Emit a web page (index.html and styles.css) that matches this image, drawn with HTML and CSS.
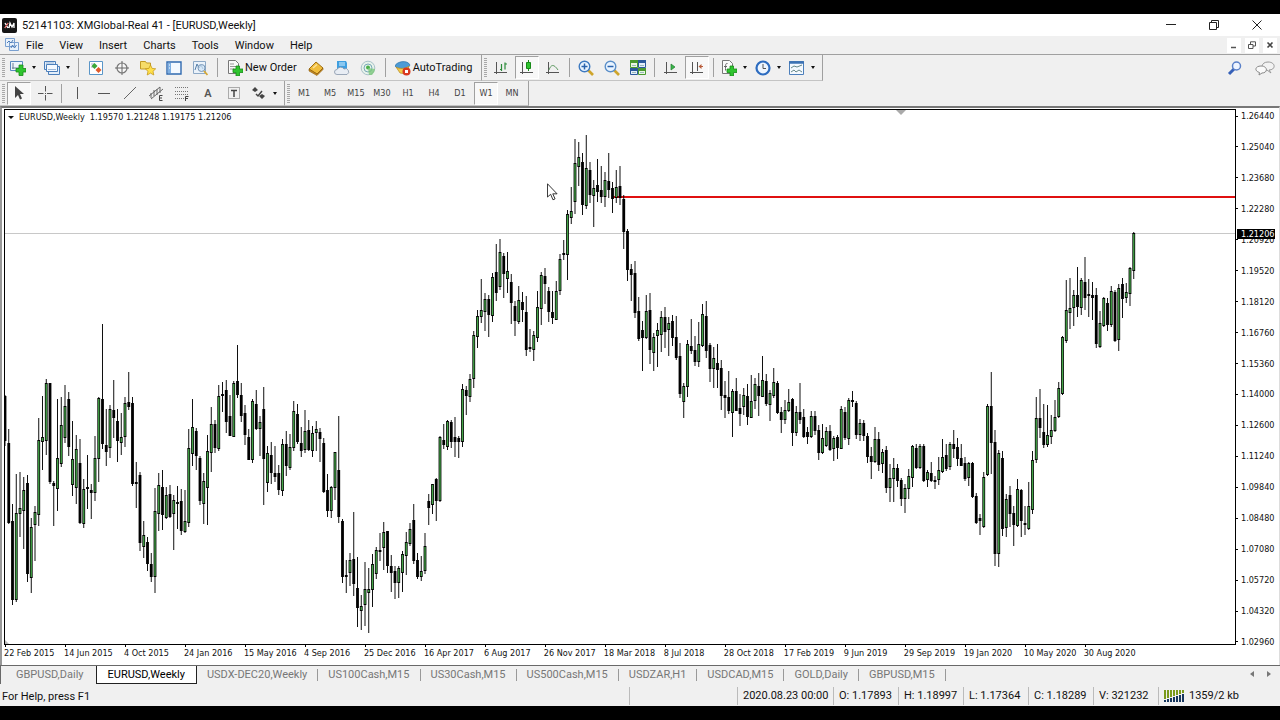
FILE: index.html
```html
<!DOCTYPE html>
<html lang="en">
<head>
  <meta charset="UTF-8" />
  <meta name="viewport" content="width=device-width, initial-scale=1.0"/>
  <title>52141103: XMGlobal-Real 41 - [EURUSD,Weekly]</title>
  <link rel="stylesheet" href="styles.css">
</head>
<body>
  <header class="titlebar">
    <svg class="app-logo" viewBox="0 0 15 15"><rect width="15" height="15" rx="2" fill="#151515"/><path d="M3 5l3 5M6 5l-3 5M7 10l1-5 2 4 2-4v5" stroke="#fff" stroke-width="1.3" fill="none"/><path d="M3 10l3-5" stroke="#d33" stroke-width="1"/></svg>
    <h1>52141103: XMGlobal-Real 41 - [EURUSD,Weekly]</h1>
    <div class="window-buttons">
      <button aria-label="Minimize"><svg viewBox="0 0 10 10"><path d="M0 4.5h10" stroke="#222" fill="none"/></svg></button>
      <button aria-label="Restore"><svg viewBox="0 0 10 10"><path d="M.5 2.5h7v7h-7zM2.500 2.500v-2h7v7h-2" stroke="#222" fill="none"/></svg></button>
      <button aria-label="Close"><svg viewBox="0 0 10 10"><path d="M.5.5l9 9M9.500.5l-9 9" stroke="#222" fill="none"/></svg></button>
    </div>
  </header>

  <nav class="menubar">
    <svg class="chart-logo" viewBox="0 0 14 14"><path d="M.5.5h9v8h-9zM4.500 4.500h9v8h-9z" fill="#e8f1fb" stroke="#7aa0d0"/><path d="M2 5l2-2 2 2 2-3M6 10l1.500-3 2 3 2-3" stroke="#4e7cb8" fill="none"/></svg>
    <a href="#">File</a>
    <a href="#">View</a>
    <a href="#">Insert</a>
    <a href="#">Charts</a>
    <a href="#">Tools</a>
    <a href="#">Window</a>
    <a href="#">Help</a>
    <div class="mdi-buttons">
      <button aria-label="Minimize chart"><svg viewBox="0 0 8 8"><path d="M1 6.500h5" stroke="#555" stroke-width="1.500"/></svg></button>
      <button aria-label="Restore chart"><svg viewBox="0 0 8 8"><path d="M.5 3.500h4.500v4H.5zM2.500 3V.8h5V5H5" stroke="#555" fill="none"/></svg></button>
      <button aria-label="Close chart"><svg viewBox="0 0 8 8"><path d="M1.500 1.500l5 5M6.500 1.500l-5 5" stroke="#444" stroke-width="1.600"/></svg></button>
    </div>
  </nav>

  <div class="toolbar standard">
    <div class="group">
      <span class="grip"></span>
      <button class="drop" aria-label="New chart"><svg viewBox="0 0 16 16"><path d="M.5 1.500h12v9H.5z" fill="#eef5fc" stroke="#5b8ac0"/><path d="M3 3v6M2 8h8" stroke="#6c7f95"/><path d="M9 5h4v3.500h3v3.500h-3v3.500H9V12H6V8.500h3z" fill="#2fc42f" stroke="#168a16" stroke-width=".8"/></svg></button>
      <button class="drop" aria-label="Profiles"><svg viewBox="0 0 16 16"><path d="M.5 1.500h11v8H.5zM4.500 6.500h11v8h-11z" fill="#e3eefa" stroke="#4c7fbb"/><path d="M2.500 4.500h11v7h-11z" fill="#f4f9ff" stroke="#4c7fbb"/><path d="M2 3h8M4 9.500h8" stroke="#9ab7d8"/></svg></button>
      <span class="sep"></span>
      <button aria-label="Market watch"><svg viewBox="0 0 16 16"><path d="M1.500 1.500h13v13h-13z" fill="#fff" stroke="#5a96c8"/><path d="M3 4h3M3 7h2" stroke="#aac"/><path d="M6.500 3l3 3-3 3-3-3z" fill="#39a839"/><path d="M10.500 7l3 3-3 3-3-3z" fill="#e05a2b"/></svg></button>
      <button aria-label="Data window"><svg viewBox="0 0 16 16"><circle cx="8" cy="8" r="5" fill="#f7f7f7" stroke="#777" stroke-width="1.200"/><path d="M8 1v14M1 8h14" stroke="#666"/></svg></button>
      <button aria-label="Navigator"><svg viewBox="0 0 16 16"><path d="M.5 1.500h5l1 1.500h4v6h-10z" fill="#f6dc6a" stroke="#c29a26"/><path d="M10.500 5l1.600 3.400 3.600.4-2.700 2.500.8 3.700-3.300-1.900L7.200 15l.8-3.700-2.700-2.500 3.600-.4z" fill="#ffe04a" stroke="#c79a1c" stroke-width=".8"/></svg></button>
      <button aria-label="Terminal"><svg viewBox="0 0 16 16"><path d="M1 2h14v12H1z" fill="#f4f9ff" stroke="#2f6ab0" stroke-width="1.400"/><path d="M2 3h3v10H2z" fill="#7eb0e4"/><path d="M3 5h1M3 8h1" stroke="#fff"/></svg></button>
      <button aria-label="Strategy tester"><svg viewBox="0 0 16 16"><path d="M1.500 1.500h12v12h-12z" fill="#eaf2fa" stroke="#8da9c6"/><path d="M3 10l2-6 2 4 2-3 2 4" stroke="#547ea8" fill="none"/><circle cx="9.500" cy="8" r="3.500" fill="#cfe4f7" fill-opacity=".7" stroke="#7897b8"/><path d="M12 11l3.500 4" stroke="#d6a834" stroke-width="1.800"/></svg></button>
      <span class="sep"></span>
      <button class="wide"><svg viewBox="0 0 16 16"><path d="M1.500.5h7l3 3v10h-10z" fill="#fafafa" stroke="#777"/><path d="M3 4h4M3 6.500h6M3 9h4" stroke="#999"/><path d="M9 6h3.500v3H16v3.500h-3.500V16H9v-3.500H6V9h3z" fill="#2fc42f" stroke="#168a16" stroke-width=".8"/></svg>New Order</button>
      <button aria-label="MetaEditor"><svg viewBox="0 0 16 16"><path d="M1 9l7-7 7 6-6 6z" fill="#f0bd3c" stroke="#a06f14"/><path d="M1 9v2l8 4.500 6-6V8l-6 6z" fill="#c98c1e" stroke="#8a5c10" stroke-width=".6"/><path d="M5 8l4-3.500" stroke="#fbe29a" stroke-width="1.500"/></svg></button>
      <button aria-label="MQL5 community"><svg viewBox="0 0 16 16"><path d="M3 1h9l1 2v7H3z" fill="#3f9fe0"/><path d="M5 3h6M5 5h6" stroke="#d8f0ff"/><path d="M3 14.500a2.500 2.500 0 0 1 0-5 4 4 0 0 1 7-.5 3 3 0 0 1 3 5.500z" fill="#e8edf4" stroke="#8795aa" stroke-width=".8"/></svg></button>
      <button aria-label="Signals"><svg viewBox="0 0 16 16"><circle cx="8" cy="8" r="6.800" fill="#e7f2ea" stroke="#a9c2c9"/><circle cx="8" cy="8" r="4" fill="none" stroke="#79a9b8"/><circle cx="8" cy="7.500" r="2" fill="#4ab04a"/><path d="M8 8l1 7h3a8 8 0 0 0 3-6z" fill="#7cc77c" fill-opacity=".8"/></svg></button>
      <span class="sep"></span>
      <button class="wide"><svg viewBox="0 0 16 16"><path d="M0 6c1-4 12-7 15-1l-3 4H3z" fill="#4c9bd6" stroke="#2f74aa" stroke-width=".7"/><path d="M1 7c3 2 10 2 13-1l-3 8-6-1z" fill="#f3c94b" stroke="#b48a20" stroke-width=".7"/><circle cx="11.500" cy="11.500" r="4" fill="#d9381e"/><path d="M10 10h3v3h-3z" fill="#fff"/></svg>AutoTrading</button>
    </div>
    <div class="group">
      <span class="grip"></span>
      <button aria-label="Bar chart"><svg viewBox="0 0 16 16"><path d="M3.500 2v12M1 12.500h13" stroke="#555"/><path d="M8.500 4v7M7 9.500h1M12 2.500v7M12 4h2" stroke="#2b8b3a" stroke-width="1.200"/></svg></button>
      <button class="pressed" aria-label="Candlesticks"><svg viewBox="0 0 16 16"><path d="M3.500 2v12M1 12.500h13" stroke="#555"/><path d="M9.500 0v11" stroke="#178a17"/><path d="M7.500 2.500h4v6h-4z" fill="#2fc42f" stroke="#178a17"/></svg></button>
      <button aria-label="Line chart"><svg viewBox="0 0 16 16"><path d="M3.500 2v12M1 12.500h13" stroke="#555"/><path d="M4 10c2-6 5-6 9 0" stroke="#5f9a62" fill="none"/></svg></button>
      <span class="sep"></span>
      <button aria-label="Zoom in"><svg viewBox="0 0 16 16"><path d="M10 10l5 5" stroke="#cfa52c" stroke-width="2.600"/><circle cx="6.500" cy="6.500" r="5.300" fill="#e9f4ff" stroke="#3c79c0" stroke-width="1.400"/><path d="M6.500 3.500v6M3.500 6.500h6" stroke="#2a63ad" stroke-width="1.500"/></svg></button>
      <button aria-label="Zoom out"><svg viewBox="0 0 16 16"><path d="M10 10l5 5" stroke="#cfa52c" stroke-width="2.600"/><circle cx="6.500" cy="6.500" r="5.300" fill="#e9f4ff" stroke="#5b8fc9" stroke-width="1.400"/><path d="M3.500 6.500h6" stroke="#2a63ad" stroke-width="1.500"/></svg></button>
      <button aria-label="Tile windows"><svg viewBox="0 0 16 16"><path d="M.5.5h7v7h-7zM8.500 8.500h7v6h-7z" fill="#eaf6e4" stroke="#4a9a30"/><path d="M8.500.5h7v7h-7zM.5 8.500h7v6h-7z" fill="#e4eefa" stroke="#2c5a9c"/><path d="M0 1.500h8M8 9.500h8" stroke="#4a9a30" stroke-width="3"/><path d="M8 1.500h8M0 9.500h8" stroke="#2c5a9c" stroke-width="3"/><path d="M2 5.500h4M10 5.500h4M2 12.500h4M10 12.500h4" stroke="#9bb"/></svg></button>
      <span class="sep"></span>
      <button aria-label="Auto scroll"><svg viewBox="0 0 16 16"><path d="M3.500 2v12M1 12.500h13" stroke="#555"/><path d="M8 4l4 3-4 3z" fill="#39b54a" stroke="#1f7d2c" stroke-width=".7"/></svg></button>
      <button class="pressed" aria-label="Chart shift"><svg viewBox="0 0 16 16"><path d="M3.500 2v12M1 12.500h13M8.500 2v9" stroke="#555"/><path d="M9.500 6.500l3-2.500v5z" fill="#b85c3a"/><path d="M12 6.500h2" stroke="#b85c3a"/></svg></button>
      <span class="sep"></span>
      <button class="drop" aria-label="Indicators"><svg viewBox="0 0 16 16"><path d="M1.500.5h7l3 3v10h-10z" fill="#fafafa" stroke="#777"/><path d="M6.500 3.500c-2-.5-2 1-2 7M3 6.500h3" stroke="#666" fill="none"/><path d="M9 6h3.500v3H16v3.500h-3.500V16H9v-3.500H6V9h3z" fill="#2fc42f" stroke="#168a16" stroke-width=".8"/></svg></button>
      <button class="drop" aria-label="Periodicity"><svg viewBox="0 0 16 16"><circle cx="8" cy="8" r="6.500" fill="#eef6ff" stroke="#2d6cc0" stroke-width="2.200"/><path d="M8 4v4.500h3" stroke="#555" fill="none"/></svg></button>
      <button class="drop" aria-label="Templates"><svg viewBox="0 0 16 16"><path d="M.5 1.500h14v13H.5z" fill="#f4f9ff" stroke="#4c7fbb"/><path d="M0 2.500h15" stroke="#3c72b3" stroke-width="2.500"/><path d="M2 8l3-2 3 1 5-2M2 12l3-2 2 2 3-2 3 2" stroke="#688" fill="none"/></svg></button>
    </div>
    <div class="toolbar-right">
      <button aria-label="Search"><svg viewBox="0 0 16 16"><path d="M2 14l5-5" stroke="#3560b8" stroke-width="3"/><circle cx="9.500" cy="6" r="4" fill="#eef4ff" stroke="#5a80c8" stroke-width="1.500"/></svg></button>
      <button aria-label="Chat"><svg viewBox="0 0 20 16"><path d="M13 2c8 0 8 8 1 8l2 3-4-3c-7-1-6-8 1-8z" fill="#f2f2f2" stroke="#999"/><path d="M6 6c7 0 7 7 1 7l-3 2 .5-2.500C-1 11 0 6 6 6z" fill="#fafafa" stroke="#888"/></svg></button>
    </div>
  </div>

  <div class="toolbar">
    <div class="group">
      <span class="grip"></span>
      <button class="pressed" aria-label="Cursor"><svg viewBox="0 0 16 16"><path d="M4 1v12l3-3 2 4.500 2-1L9 9h4z" fill="#444"/></svg></button>
      <button aria-label="Crosshair"><svg viewBox="0 0 16 16"><path d="M8.500 1v5.500M8.500 10v5.500M1 8.500h5.500M10 8.500h5.500M8 8.500h1" stroke="#555"/></svg></button>
      <span class="sep"></span>
      <button aria-label="Vertical line"><svg viewBox="0 0 16 16"><path d="M7.500 2v12" stroke="#555"/></svg></button>
      <button aria-label="Horizontal line"><svg viewBox="0 0 16 16"><path d="M2 8.500h12" stroke="#555"/></svg></button>
      <button aria-label="Trendline"><svg viewBox="0 0 16 16"><path d="M2 14L14 2" stroke="#666"/></svg></button>
      <button aria-label="Equidistant channel"><svg viewBox="0 0 16 16"><path d="M1 11L12 2M3 14L15 4M3 8v5M6 5v6M9 4v6M12 2v6" stroke="#666"/><path d="M14.500 10.500h-3v5h3M11.500 13h2.500" stroke="#444" fill="none"/></svg></button>
      <button aria-label="Fibonacci"><svg viewBox="0 0 16 16"><path d="M1 2.500h14M1 6.500h14M1 9.500h14M1 13.500h9" stroke="#777" stroke-dasharray="1 1"/><path d="M14.500 11.500h-3V16M11.500 13.500h2.500" stroke="#444" fill="none"/></svg></button>
      <button class="letter" aria-label="Text">A</button>
      <button aria-label="Text label"><svg viewBox="0 0 16 16"><path d="M2.500 2.500h11v11h-11z" fill="none" stroke="#666" stroke-dasharray="1 1"/><path d="M5 5.500h6M8 5.500V12" stroke="#444" stroke-width="1.500"/></svg></button>
      <button class="drop" aria-label="Arrows"><svg viewBox="0 0 16 16"><path d="M1 5l3-3 3 3-3 2zM8 11l3-2 3 2-3 3z" fill="#444"/><path d="M5 9l2 2 4-5" stroke="#444" stroke-width="1.500" fill="none"/></svg></button>
    </div>
    <div class="group">
      <span class="grip"></span>
      <button class="period">M1</button>
      <button class="period">M5</button>
      <button class="period">M15</button>
      <button class="period">M30</button>
      <button class="period">H1</button>
      <button class="period">H4</button>
      <button class="period">D1</button>
      <button class="period pressed">W1</button>
      <button class="period">MN</button>
    </div>
  </div>

  <main class="chart-window">
    <div class="plot">
      <svg class="candles" id="candles" viewBox="0 110 1312 534" preserveAspectRatio="none"></svg>
      <p class="chart-title"><span class="down-mark"></span>EURUSD,Weekly&nbsp; 1.19570 1.21248 1.19175 1.21206</p>
      <span class="shift-mark"></span>
      <span class="corner-mark"></span>
      <svg class="pointer" viewBox="0 0 12 19"><path d="M.5.5v14.500l3.500-3 2.500 6 2.300-1-2.500-5.500h4.700z" fill="#fff" stroke="#222"/></svg>
    </div>
    <div class="price-axis">
      <ol id="prices"></ol>
      <span class="current-price">1.21206</span>
    </div>
    <ol class="time-axis" id="dates"></ol>
  </main>

  <nav class="tabs">
    <a href="#">GBPUSD,Daily</a>
    <a href="#" class="active">EURUSD,Weekly</a>
    <a href="#">USDX-DEC20,Weekly</a>
    <a href="#">US100Cash,M15</a>
    <a href="#">US30Cash,M15</a>
    <a href="#">US500Cash,M15</a>
    <a href="#">USDZAR,H1</a>
    <a href="#">USDCAD,M15</a>
    <a href="#">GOLD,Daily</a>
    <a href="#">GBPUSD,M15</a>
    <div class="tab-scroll">
      <button aria-label="Previous tabs"><svg viewBox="0 0 4 6"><path d="M4 0v6L0 3z" fill="#777"/></svg></button>
      <button aria-label="Next tabs"><svg viewBox="0 0 4 6"><path d="M0 0v6l4-3z" fill="#777"/></svg></button>
    </div>
  </nav>

  <footer class="statusbar">
    <span class="help">For Help, press F1</span>
    <span class="cell profile"></span>
    <span class="cell time">2020.08.23 00:00</span>
    <span class="cell">O: 1.17893</span>
    <span class="cell">H: 1.18997</span>
    <span class="cell">L: 1.17364</span>
    <span class="cell">C: 1.18289</span>
    <span class="cell">V: 321232</span>
    <span class="cell traffic"><svg viewBox="0 0 21 12"><path d="M1 0v9M4 0v8M7 0v7M10 0v6M13 0v5M16 0v4M19 0v3" stroke="#7a9a1c" stroke-width="2"/><path d="M1 10v2M4 9v3M7 8v4M10 7v5M13 6v6M16 5v7M19 4v8" stroke="#16365e" stroke-width="2"/></svg>1359/2 kb</span>
  </footer>

  <script src="chart.js"></script>
</body>
</html>
```
FILE: styles.css
```css
:root {
  --face: #f0f0f0;
  --line: #a0a0a0;
  --dark: #696969;
  --up: #43a547;
  --ui: Roboto, "Open Sans", sans-serif;
  --small: "DejaVu Sans Condensed", "Noto Sans", sans-serif;
}

* {
  box-sizing: border-box;
}

body {
  margin: 0;
  padding: 14px 0;
  height: 100vh;
  display: flex;
  flex-direction: column;
  background: #000;
  color: #111;
  font-family: var(--ui);
  font-size: 11px;
  overflow: hidden;
}

button {
  border: 0;
  padding: 0;
  background: none;
  font: inherit;
  color: inherit;
  display: flex;
  align-items: center;
  justify-content: center;
}

a {
  color: inherit;
  text-decoration: none;
}

ol {
  list-style: none;
  margin: 0;
  padding: 0;
}

/* title and menu */
.titlebar {
  flex: 0 0 22px;
  display: flex;
  align-items: center;
  background: #fff;
  padding-left: 2px;
}

.app-logo {
  width: 15px;
  height: 15px;
  margin-right: 5px;
}

.titlebar h1 {
  margin: 0;
  font-size: 11px;
  font-weight: 400;
}

.window-buttons {
  display: flex;
  margin-left: auto;
  margin-right: 2px;
}

.window-buttons button {
  width: 43px;
  height: 20px;
}

.window-buttons svg {
  width: 10px;
  height: 10px;
}

.menubar {
  flex: 0 0 19px;
  display: flex;
  align-items: center;
  gap: 16px;
  background: var(--face);
  border-bottom: 1px solid var(--line);
  padding-left: 5px;
}

.chart-logo {
  width: 14px;
  height: 14px;
  margin-right: -9px;
}

.mdi-buttons {
  display: flex;
  gap: 4px;
  margin-left: auto;
  margin-right: 3px;
}

.mdi-buttons button {
  width: 14px;
  height: 15px;
  background: #fff;
}

.mdi-buttons svg {
  width: 8px;
  height: 8px;
}

/* toolbars */
.toolbar {
  flex: 0 0 26px;
  display: flex;
  background: var(--face);
}

.toolbar:not(.standard) {
  flex-basis: 25px;
}

.group {
  display: flex;
  align-items: center;
  gap: 2px;
  padding: 0 4px 0 2px;
  border-right: 1px solid var(--line);
  border-bottom: 1px solid #c4c4c4;
}

.group button {
  width: 24px;
  height: 23px;
}

.group svg,
.toolbar-right svg {
  width: 16px;
  height: 16px;
}

.grip {
  width: 3px;
  height: 19px;
  background: repeating-linear-gradient(#a8a8a8 0 1px, var(--face) 1px 2px);
}

.sep {
  width: 1px;
  height: 19px;
  margin: 0 2px;
  background: var(--line);
}

.standard .group:first-child .sep {
  margin: 0 3px;
}

.group .drop {
  width: 32px;
  gap: 6px;
}

.drop::after,
.down-mark {
  content: "";
  border: 3px solid transparent;
  border-top-color: #111;
  border-bottom: 0;
}

.drop::after {
  border-width: 3px 2px 0;
}

.group .wide {
  width: auto;
  gap: 2px;
  padding: 0 5px 0 4px;
}

.group .pressed {
  background: #f8f8f8;
  border: 1px solid #fff;
  border-top-color: var(--line);
  border-left-color: var(--line);
}

.group .letter {
  font-weight: 600;
  color: #555;
}

.group .period {
  font-family: var(--small);
  font-size: 9px;
  color: #444;
}

.toolbar-right {
  display: flex;
  align-items: center;
  gap: 12px;
  margin-left: auto;
  margin-right: 5px;
}

.toolbar-right button:last-child svg {
  width: 20px;
}

/* chart */
.chart-window {
  flex: 1;
  min-height: 0;
  display: grid;
  grid-template-columns: 1fr 43px;
  grid-template-rows: 1fr 20px;
  background: #fff;
  border-top: 2px solid #777;
  border-left: 2px solid #999;
  border-right: 1px solid #ddd;
  padding: 1px 0 0 2px;
  font-family: var(--small);
  font-size: 9px;
}

.plot {
  position: relative;
  min-height: 0;
  border: 1px solid #000;
}

.candles {
  display: block;
  width: 100%;
  height: 100%;
}

.candles .ink {
  fill: #000;
}

.candles .up {
  fill: var(--up);
}

.candles .bid {
  fill: #c8c8c8;
}

.candles .resistance {
  fill: #e01010;
}

.chart-title {
  position: absolute;
  top: 1px;
  left: 3px;
  margin: 0;
  display: flex;
  align-items: center;
  gap: 5px;
  line-height: 12px;
}

.shift-mark {
  position: absolute;
  top: 0;
  left: 891px;
  border: 5px solid transparent;
  border-top-color: #aaa;
  border-bottom: 0;
}

.corner-mark {
  position: absolute;
  left: 0;
  bottom: 0;
  border: 2px solid #bbb;
  border-top-color: transparent;
  border-right-color: transparent;
}

.pointer {
  position: absolute;
  left: 542px;
  top: 73px;
  width: 11px;
  height: 18px;
}

.price-axis {
  position: relative;
  margin-bottom: -3px;
  padding-top: 1px;
}

.price-axis ol {
  height: 100%;
  display: flex;
  flex-direction: column;
  justify-content: space-between;
}

.price-axis li {
  display: flex;
  align-items: center;
  gap: 3px;
  line-height: 12px;
}

.price-axis li::before {
  content: "";
  width: 2px;
  height: 1px;
  background: #000;
}

.current-price {
  position: absolute;
  top: 22%;
  left: 1px;
  width: 38px;
  margin-top: 1px;
  padding-left: 4px;
  background: #000;
  color: #fff;
  line-height: 10px;
}

.time-axis {
  display: flex;
  margin-right: 2px;
}

.time-axis li {
  flex: 0 0 4.878%;
  white-space: nowrap;
  line-height: 12px;
}

.time-axis li::before {
  content: "";
  display: block;
  width: 1px;
  height: 2px;
  margin-left: 1px;
  background: #000;
}

/* chart tabs */
.tabs {
  flex: 0 0 19px;
  display: flex;
  align-items: flex-start;
  background: var(--face);
  border-top: 1px solid var(--dark);
  border-left: 1px solid var(--dark);
  padding-left: 5px;
  color: #777;
}

.tabs a {
  margin-top: 3px;
  padding: 0 10px;
  line-height: 12px;
  border-right: 1px solid #999;
}

.tabs a:first-child {
  padding-right: 12px;
  border-right: 0;
}

.tabs .active {
  margin-top: 0;
  padding: 0 11px;
  background: #fff;
  color: #000;
  line-height: 17px;
  border: 1px solid #222;
  border-top: 0;
}

.tab-scroll {
  display: flex;
  gap: 13px;
  margin-top: 5px;
  margin-left: auto;
  margin-right: 9px;
}

.tab-scroll svg {
  width: 4px;
  height: 6px;
}

/* status bar */
.statusbar {
  flex: 0 0 22px;
  display: flex;
  align-items: center;
  background: var(--face);
  padding: 2px 0 0 2px;
}

.help {
  flex: 1;
}

.cell {
  flex: 0 0 65px;
  height: 18px;
  line-height: 18px;
  padding-left: 5px;
  border-left: 1px solid #bbb;
  white-space: nowrap;
}

.profile {
  flex-basis: 108px;
}

.time {
  flex-basis: 96px;
}

.traffic {
  flex-basis: 122px;
  display: flex;
  align-items: center;
  gap: 4px;
}

.traffic svg {
  width: 21px;
  height: 12px;
}
```
FILE: chart.js
```js
// one row per week: high, body top, body bottom, low, 1 = close above open
const weeks = [
  [395,396,440,445,0],[429,443,522,523,0],[504,521,599,604,0],[474,513,599,601,1],[472,508,513,536,1],
  [477,490,510,548,1],[475,483,573,581,0],[518,527,577,592,1],[506,512,524,560,1],[418,440,514,525,1],
  [396,437,441,469,1],[379,383,440,454,1],[383,383,481,483,0],[481,483,485,525,0],[399,458,488,510,1],
  [397,425,463,466,1],[385,406,437,442,1],[392,399,446,455,0],[421,459,484,495,1],[435,449,487,503,1],
  [439,463,522,523,0],[479,489,523,527,1],[455,487,488,508,0],[484,490,492,518,0],[436,458,492,500,1],
  [397,398,458,481,1],[324,399,443,448,0],[409,445,451,465,0],[405,409,447,457,1],[380,410,417,437,0],
  [409,421,440,461,0],[413,437,442,454,1],[397,403,436,446,1],[372,402,406,409,0],[397,403,483,485,0],
  [462,482,483,507,0],[472,475,542,550,0],[521,535,546,557,1],[537,542,563,570,0],[553,564,576,581,0],
  [488,511,576,592,1],[473,485,513,530,1],[470,487,514,529,0],[487,495,517,518,1],[485,494,516,517,0],
  [495,500,513,549,1],[486,502,503,528,0],[489,501,530,534,0],[490,521,531,532,1],[429,448,522,526,1],
  [399,427,453,465,1],[428,431,455,469,0],[456,458,500,504,0],[473,481,503,523,1],[435,451,487,524,1],
  [407,424,452,471,1],[420,424,447,452,0],[385,396,448,450,1],[382,394,395,411,0],[380,390,421,432,0],
  [395,416,435,435,0],[381,383,436,436,1],[345,381,394,397,0],[383,395,415,421,0],[405,413,434,444,0],
  [429,437,459,459,0],[399,401,459,462,1],[390,404,428,429,0],[416,422,428,455,1],[387,409,458,504,0],
  [446,453,482,491,1],[442,455,472,483,0],[446,473,476,481,0],[465,473,489,494,0],[439,444,490,495,1],
  [431,444,465,475,0],[434,447,467,469,1],[401,411,447,450,1],[404,414,441,443,0],[427,443,450,456,0],
  [410,431,449,452,1],[420,430,449,450,0],[426,433,450,456,1],[421,429,432,450,1],[428,432,438,461,0],
  [438,443,491,492,0],[474,490,510,516,0],[486,487,510,517,1],[452,452,487,499,1],[416,470,516,522,0],
  [519,521,576,582,0],[560,575,576,592,0],[553,560,572,585,1],[512,559,583,595,0],[557,588,607,626,0],
  [595,606,610,629,1],[562,589,604,625,1],[568,589,592,632,1],[554,564,589,606,1],[547,550,573,578,1],
  [533,550,551,560,0],[522,532,547,569,1],[531,531,565,572,0],[555,566,572,591,0],[566,571,582,598,0],
  [566,568,582,597,1],[551,554,572,591,1],[532,542,555,574,1],[523,529,543,545,1],[504,520,560,563,0],
  [553,560,576,578,0],[556,571,576,580,1],[533,546,570,573,1],[494,501,507,524,0],[484,484,504,513,1],
  [478,479,500,520,0],[436,437,500,501,1],[424,440,444,448,0],[420,421,446,449,1],[420,422,441,447,0],
  [417,437,441,456,0],[436,438,441,457,0],[384,389,441,446,1],[386,390,395,414,0],[374,379,396,401,1],
  [331,335,378,387,1],[310,316,336,347,1],[279,310,316,322,1],[293,299,311,330,1],[295,299,314,336,0],
  [273,277,315,321,1],[244,272,292,300,0],[239,252,286,289,1],[253,256,273,297,0],[252,271,278,292,1],
  [274,282,302,323,0],[301,306,320,335,0],[286,300,321,323,1],[292,302,309,321,0],[296,312,349,355,0],
  [329,347,348,351,0],[331,335,349,360,1],[291,307,337,341,1],[272,275,308,324,1],[268,276,283,303,0],
  [287,291,311,321,0],[291,312,317,323,0],[281,291,319,319,1],[254,259,290,294,1],[240,253,254,259,0],
  [210,214,254,279,1],[187,211,217,223,1],[139,163,201,213,1],[142,157,166,185,1],[153,162,204,214,0],
  [135,168,205,208,1],[162,170,194,202,0],[180,188,195,226,1],[159,185,191,201,0],[166,190,196,202,0],
  [172,180,196,206,1],[153,181,189,197,0],[182,188,198,212,0],[170,187,197,202,1],[166,186,197,204,0],
  [195,199,231,248,0],[229,231,269,280,0],[264,269,274,300,0],[261,273,312,317,0],[297,311,338,340,0],
  [321,330,337,370,0],[295,311,337,338,1],[293,310,349,363,0],[333,337,352,370,1],[323,330,335,366,1],
  [311,317,334,351,1],[307,317,331,347,0],[317,323,329,355,1],[315,321,337,345,0],[316,337,357,359,0],
  [343,356,393,397,0],[383,386,401,417,1],[340,344,386,396,1],[319,346,350,353,0],[336,350,361,365,0],
  [322,344,361,366,1],[304,314,345,346,1],[301,316,350,357,0],[343,345,368,381,0],[347,358,368,387,1],
  [344,363,369,387,0],[360,368,395,409,0],[381,395,397,417,0],[371,397,410,413,0],[389,391,412,436,1],
  [378,391,410,410,0],[394,408,413,425,0],[388,395,406,414,1],[384,396,416,424,0],[375,401,417,417,1],
  [378,384,400,408,1],[373,386,395,415,0],[356,380,396,396,1],[374,381,403,405,0],[390,393,404,420,1],
  [368,382,395,397,1],[381,383,412,413,0],[407,412,419,432,0],[400,410,419,423,1],[389,402,410,411,1],
  [398,399,432,445,0],[406,412,432,435,1],[383,412,419,423,0],[409,417,436,437,0],[427,432,436,443,0],
  [411,416,436,437,1],[411,416,430,434,0],[425,430,452,459,0],[424,438,452,453,1],[427,431,445,446,1],
  [425,431,449,450,0],[436,438,448,460,1],[435,437,447,458,0],[406,409,448,448,1],[407,412,437,439,0],
  [398,400,438,444,1],[391,400,401,406,0],[401,403,434,438,0],[419,423,434,440,1],[420,423,435,440,0],
  [433,436,456,462,0],[447,456,461,478,0],[427,439,461,462,1],[432,439,464,470,0],[449,452,463,472,1],
  [446,450,487,492,0],[464,478,487,501,1],[458,468,478,501,1],[464,468,480,486,0],[478,480,498,505,0],
  [484,488,498,512,1],[469,476,488,498,1],[445,446,477,486,1],[444,448,467,468,0],[444,446,467,468,1],
  [444,446,480,481,0],[470,472,479,486,1],[462,473,480,481,0],[476,480,481,488,0],[457,470,479,484,1],
  [439,457,471,472,1],[444,455,468,470,0],[442,444,466,469,1],[430,444,448,457,0],[438,447,458,465,0],
  [444,458,465,465,0],[457,463,478,480,0],[462,463,477,485,1],[462,463,496,497,0],[493,496,522,523,0],
  [514,518,520,534,0],[472,477,526,527,1],[404,406,474,475,1],[372,406,442,473,0],[430,442,553,565,0],
  [450,453,553,566,1],[451,458,528,535,0],[494,499,527,536,1],[486,495,513,526,0],[506,513,524,545,0],
  [479,489,525,526,1],[489,490,520,536,0],[506,523,524,534,0],[482,506,528,529,1],[451,460,509,513,1],
  [397,418,459,462,1],[389,418,427,437,0],[404,432,444,447,0],[405,435,444,446,1],[415,430,436,443,1],
  [400,417,430,431,1],[382,388,416,417,1],[336,337,393,394,1],[280,310,340,342,1],[278,308,312,328,1],
  [290,295,307,325,1],[267,295,306,316,0],[278,280,307,314,1],[257,282,297,309,0],[279,294,295,316,0],
  [282,295,297,319,0],[288,295,343,347,0],[311,323,346,347,1],[297,298,325,326,1],[298,303,324,330,0],
  [286,291,324,326,1],[290,292,340,341,0],[284,288,339,350,1],[278,284,298,317,0],[283,292,297,302,1],
  [267,268,293,305,1],[232,233,270,278,1]
];

const prices = [
  "1.26440", "1.25040", "1.23680", "1.22280", "1.20920", "1.19520", "1.18120", "1.16760", "1.15360",
  "1.14000", "1.12600", "1.11240", "1.09840", "1.08480", "1.07080", "1.05720", "1.04320", "1.02960"
];

const dates = [
  "22 Feb 2015", "14 Jun 2015", "4 Oct 2015", "24 Jan 2016", "15 May 2016", "4 Sep 2016", "25 Dec 2016",
  "16 Apr 2017", "6 Aug 2017", "26 Nov 2017", "18 Mar 2018", "8 Jul 2018", "28 Oct 2018", "17 Feb 2019",
  "9 Jun 2019", "29 Sep 2019", "19 Jan 2020", "10 May 2020", "30 Aug 2020"
];

const STEP = 4;

function rect(cls, x, y, w, h) {
  return `<rect class="${cls}" x="${x}" y="${y}" width="${w}" height="${h}"/>`;
}

let out = rect("bid", 0, 233, 1312, 1);
out += rect("resistance", 648, 196, 664, 2);

weeks.forEach(([high, top, bottom, low, up], i) => {
  const x = i * STEP;
  out += rect("ink", x - 0.5, high, 1, low - high + 1);
  out += rect("ink", x - 1.5, top, 3, bottom - top + 1);
  if (up && bottom - top > 2) {
    out += rect("up", x - 0.7, top + 1, 1.4, bottom - top - 1);
  }
});

document.getElementById("candles").innerHTML = out;
document.getElementById("prices").innerHTML = prices.map(p => `<li>${p}</li>`).join("");
document.getElementById("dates").innerHTML = dates.map(d => `<li>${d}</li>`).join("");
```
